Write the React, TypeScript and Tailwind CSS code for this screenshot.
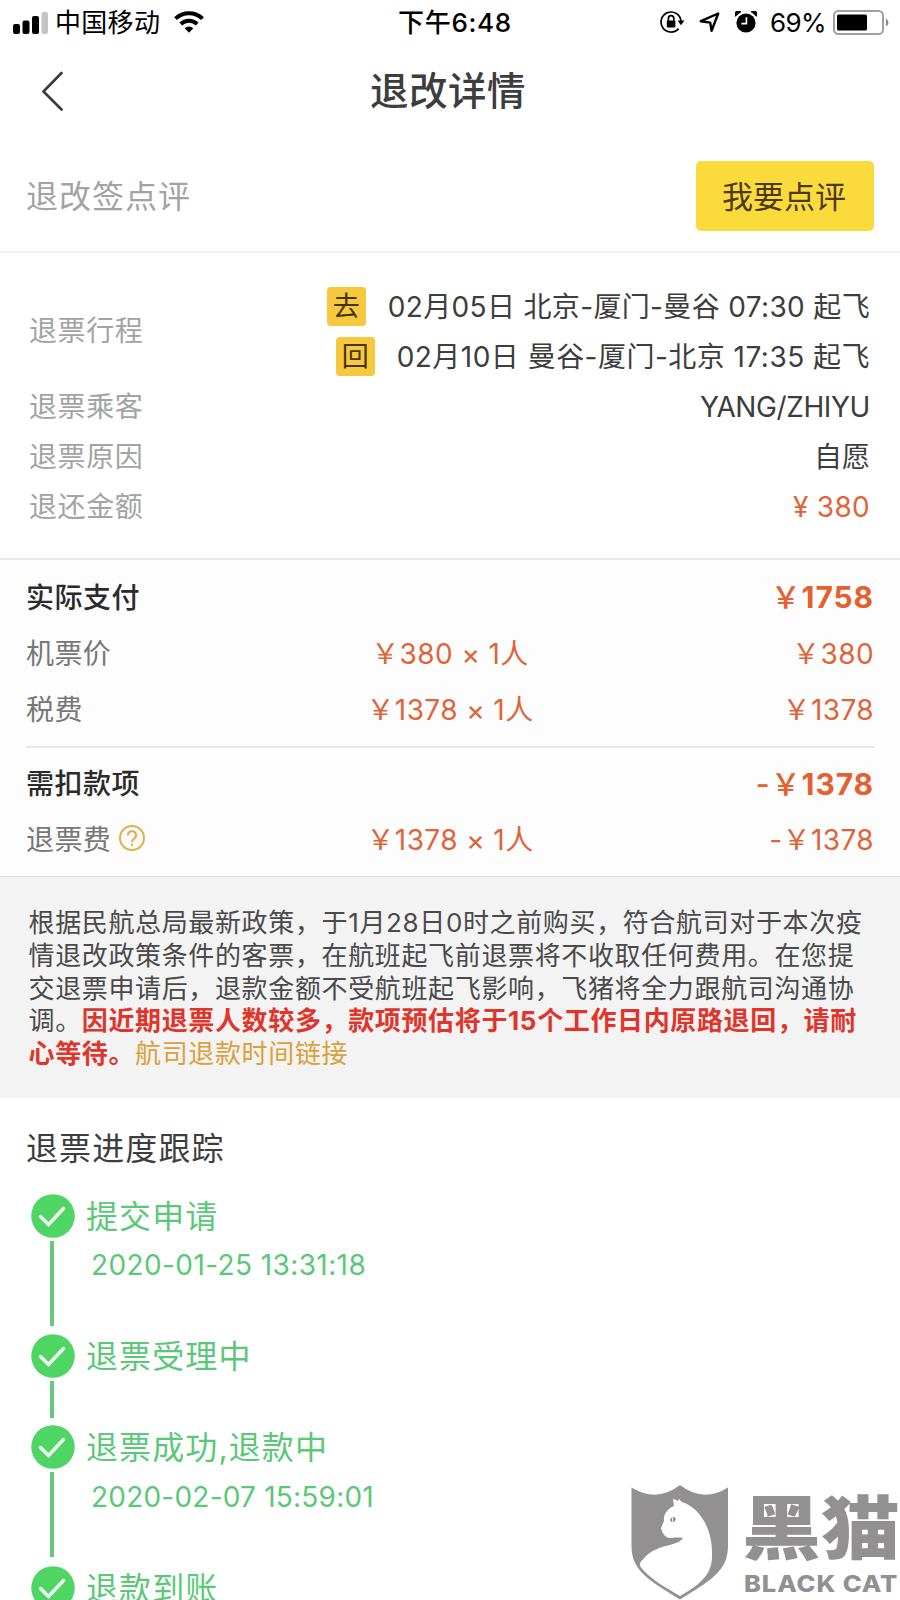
import type { ReactNode } from "react";

const trips = [
  { tag: "去", text: "02月05日 北京-厦门-曼谷 07:30 起飞", spacing: "tracking-[0.35px]" },
  { tag: "回", text: "02月10日 曼谷-厦门-北京 17:35 起飞", spacing: "tracking-[0.48px]" },
];

const steps = [
  { title: "提交申请", time: "2020-01-25 13:31:18", spacing: "tracking-[0.4px]", height: "h-[140.5px]", line: "h-[85px]" },
  { title: "退票受理中", height: "h-[91px]", line: "h-[37px]" },
  { title: "退票成功,退款中", time: "2020-02-07 15:59:01", spacing: "tracking-[0.22px]", height: "h-[140.5px]", line: "h-[85px]" },
  { title: "退款到账", height: "h-[44px]" },
];

function StatusBar() {
  return (
    <div className="h-[46px] shrink-0 flex items-center justify-between pl-[13px] pr-[10px] text-black">
      <div className="flex items-center w-[300px]">
        <svg width="36" height="22" viewBox="0 0 36 22">
          <rect x="0" y="12" width="7" height="10" rx="2" />
          <rect x="9.5" y="8.5" width="7" height="13.5" rx="2" />
          <rect x="19" y="4" width="7" height="18" rx="2" />
          <rect x="28.5" y="0" width="6.5" height="22" rx="2" fill="#c4c4c4" />
        </svg>
        <span className="ml-[6px] text-[26px] leading-none tracking-[0.3px]">中国移动</span>
        <svg className="ml-[14px] mb-[2px]" width="30" height="22" viewBox="0 0 30 22" fill="none" stroke="#000" strokeWidth="4">
          <path d="M1.5 7.6a19.5 19.5 0 0 1 27 0" />
          <path d="M6.8 13a12 12 0 0 1 16.4 0" />
          <path d="M15 21.8l-4.3-4.6a6.2 6.2 0 0 1 8.6 0z" fill="#000" stroke="none" />
        </svg>
      </div>
      <span className="pl-[7px] text-[26px] leading-none font-medium tracking-[0.7px]">下午6:48</span>
      <div className="flex items-center justify-end w-[300px]">
        {/* rotation lock */}
        <svg className="mb-[2px]" width="25" height="22" viewBox="0 0 25 22" fill="none" stroke="#000" strokeWidth="1.7">
          <path d="M18.6 17.6A10 10 0 1 1 21 10" />
          <path d="M17.5 9.6h7l-3.5 4.6z" fill="#000" stroke="none" />
          <rect x="6.8" y="9.6" width="8.6" height="6.8" rx="1" fill="#000" stroke="none" />
          <path d="M8.4 10V7.4a2.7 2.7 0 0 1 5.4 0V10" />
        </svg>
        <svg className="ml-[14px] mb-[2px]" width="21" height="21" viewBox="0 0 21 21" fill="none" stroke="#000" strokeWidth="2.4" strokeLinejoin="round">
          <path d="M19.2 1.5 12.6 18.8 11.2 10.6 1.8 9.2z" />
        </svg>
        {/* alarm clock */}
        <svg className="ml-[15px] mb-[2px]" width="22" height="22" viewBox="0 0 22 22">
          <circle cx="11" cy="12" r="9.6" />
          <path d="M1 5.2a3 3 0 0 1 4.6-4M21 5.2a3 3 0 0 0-4.6-4" stroke="#000" strokeWidth="1.6" />
          <path d="M11.4 6.2v6.4H6.4" stroke="#fff" strokeWidth="1.7" fill="none" />
        </svg>
        <span className="ml-[13px] mr-[7px] text-[26px] leading-none tracking-[-0.6px]">69%</span>
        <svg className="mb-[2px]" width="57" height="25" viewBox="0 0 57 25">
          <rect x="1" y="1" width="49" height="23" rx="4.5" fill="none" stroke="#a0a0a0" strokeWidth="2" />
          <rect x="4" y="4.5" width="30" height="16" rx="1.5" />
          <path d="M53 8.5a4.5 4.5 0 0 1 0 8z" fill="#8c8c8c" />
        </svg>
      </div>
    </div>
  );
}

function DetailRow({ label, children }: { label: string; children: ReactNode }) {
  return (
    <div className="h-[50.2px] flex items-center justify-between pl-[29px] pr-[30px]">
      <span className="text-[#a3a3a3] tracking-[0.6px]">{label}</span>
      {children}
    </div>
  );
}

function PriceRow({ label, unit, total, help }: { label: string; unit: string; total: string; help?: boolean }) {
  return (
    <div className="h-[56.5px] grid grid-cols-[1fr_auto_1fr] items-center text-[#e0643a]">
      <span className="flex items-center text-[#777777] tracking-[0.4px]">
        {label}
        {help && (
          <svg className="ml-[7px] mb-[4px]" width="28" height="28" viewBox="0 0 28 28" fill="none" stroke="#dcb04a" strokeWidth="2">
            <circle cx="14" cy="14" r="12" />
            <path d="M9.9 11.4a4.1 4.1 0 1 1 6.2 3.4c-1.4.9-2.1 1.5-2.1 3.2" />
            <path d="M14 19.6v2.2" />
          </svg>
        )}
      </span>
      <span className="tracking-[0.4px]">{unit}</span>
      <span className="text-right tracking-[0.4px]">{total}</span>
    </div>
  );
}

function TotalRow({ label, sign, total }: { label: string; sign: string; total: string }) {
  return (
    <div className="h-[56px] flex items-center justify-between">
      <span className="font-medium text-[#2b2b2b] tracking-[0.5px]">{label}</span>
      <span className="pb-[1px] text-[30px] font-bold tracking-[0.9px] text-[#e4602f]">
        <span className="font-medium">{sign}</span>
        {total}
      </span>
    </div>
  );
}

function CheckCircle() {
  return (
    <svg className="shrink-0" width="44" height="44" viewBox="0 0 44 44">
      <circle cx="22" cy="22" r="21.8" fill="#4fd564" />
      <path d="M9.5 22.5 17.5 30.5 32.5 14.5" fill="none" stroke="#effff0" strokeWidth="3.4" strokeLinecap="round" />
    </svg>
  );
}

function Watermark() {
  return (
    <div className="absolute left-[631px] top-[1484px] flex text-[#929091]">
      <svg width="98" height="116" viewBox="0 0 98 116">
        <path d="M.5 3.5Q26 19 49 1Q72 19 97 3.5V62C97 88 78 97 49 115.5C20 97 .5 88 .5 62z" fill="#929091" />
        {/* cat silhouette */}
        <path
          d="M42 14.5 46.5 17 48 15 51 18C69 24 82 45 81 72C81 89 72 99 49 112C36 104 18 95 9 82C8 78 12 76 14 73C28 59 46 63 52 54C46 53 42 54 38 54C34 53 31 49 30 44L33 37C32 29 38 24 43 22z"
          fill="#fff"
        />
        <ellipse cx="42" cy="35.5" rx="2.8" ry="2.3" fill="#929091" transform="rotate(-30 42 35.5)" />
        <path d="M41.5 33.5v4" stroke="#fff" strokeWidth="1" />
      </svg>
      <div className="ml-[14px] flex flex-col items-start">
        <span className="-ml-[1px] mt-[2px] h-[84px] text-[79px] leading-[84px] font-black whitespace-nowrap origin-center scale-y-[0.88]">黑猫</span>
        <span className="mt-[2px] ml-[1px] text-[23px] leading-[24px] font-extrabold tracking-[0.8px] whitespace-nowrap origin-left scale-x-[1.11]">BLACK CAT</span>
      </div>
    </div>
  );
}

export default function App() {
  return (
    <div className="relative w-[900px] h-[1600px] overflow-hidden flex flex-col bg-white font-['Inter','Noto_Sans_CJK_SC',sans-serif] text-[28px] leading-none text-[#3d3d3d]">
      <StatusBar />

      <header className="h-[90px] shrink-0 grid grid-cols-[1fr_auto_1fr] items-center">
        <svg className="ml-[41px]" width="22" height="40" viewBox="0 0 22 40" fill="none" stroke="#3a3a3a" strokeWidth="2.6" strokeLinecap="round" strokeLinejoin="round">
          <path d="M20.5 2 2.5 20.5 20.5 38.5" />
        </svg>
        <h1 className="pr-[4px] pt-[1px] text-[38.5px] font-medium tracking-[0.5px]">退改详情</h1>
      </header>

      <section className="h-[117px] shrink-0 flex items-center justify-between pt-[5px] pl-[26px] pr-[26px] border-b-2 border-[#efefef]">
        <span className="pt-[2px] text-[32px] tracking-[1px] text-[#a3a3a3]">退改签点评</span>
        <button className="w-[178px] h-[70px] pr-[2px] rounded-[5px] bg-[#fbda3c] text-[31px] text-[#4a3a10]">我要点评</button>
      </section>

      <section className="h-[307px] shrink-0 pt-[28px] border-b-2 border-[#e8e8e8]">
        <div className="h-[100.5px] flex items-center justify-between pl-[29px] pr-[30px]">
          <span className="text-[#a3a3a3] tracking-[0.6px]">退票行程</span>
          <div className="flex flex-col items-end">
            {trips.map((trip) => (
              <div key={trip.tag} className="h-[50.3px] flex items-center">
                <span className="w-[39px] h-[39px] mr-[22px] flex items-center justify-center rounded-[4px] bg-[#f6c83e] text-[27px] text-[#4a3208]">
                  {trip.tag}
                </span>
                <span className={`pt-[1px] ${trip.spacing}`}>{trip.text}</span>
              </div>
            ))}
          </div>
        </div>
        <DetailRow label="退票乘客">
          <span className="tracking-[-0.4px]">YANG/ZHIYU</span>
        </DetailRow>
        <DetailRow label="退票原因">自愿</DetailRow>
        <DetailRow label="退还金额">
          <span className="tracking-[0.3px] text-[#e0643a]">¥ 380</span>
        </DetailRow>
      </section>

      <section className="h-[317px] shrink-0 px-[26px] pt-[9.5px] bg-[#fdfdfd] border-b border-[#dcdcdc]">
        <TotalRow label="实际支付" sign="￥" total="1758" />
        <PriceRow label="机票价" unit="￥380 × 1人" total="￥380" />
        <PriceRow label="税费" unit="￥1378 × 1人" total="￥1378" />
        <div className="mt-[7.5px] h-[2px] mb-[8px] bg-[#e8e8e8]" />
        <TotalRow label="需扣款项" sign="-￥" total="1378" />
        <PriceRow label="退票费" unit="￥1378 × 1人" total="-￥1378" help />
      </section>

      <section className="h-[221px] shrink-0 pt-[30px] pl-[28.5px] bg-[#f3f3f3] text-[26px] leading-[32.8px] tracking-[0.64px] whitespace-nowrap text-[#4a4a4a]">
        <p>根据民航总局最新政策，于1月28日0时之前购买，符合航司对于本次疫</p>
        <p>情退改政策条件的客票，在航班起飞前退票将不收取任何费用。在您提</p>
        <p>交退票申请后，退款金额不受航班起飞影响，飞猪将全力跟航司沟通协</p>
        <p>
          调。<b className="font-bold text-[#e0352b]">因近期退票人数较多，款项预估将于15个工作日内原路退回，请耐</b>
        </p>
        <p>
          <b className="font-bold text-[#e0352b]">心等待。</b>
          <a className="text-[#d9a13c]">航司退款时间链接</a>
        </p>
      </section>

      <section className="shrink-0 pt-[31px] pl-[26px]">
        <h2 className="h-[40px] leading-[40px] text-[32px] tracking-[1.1px]">退票进度跟踪</h2>
        <ol className="mt-[24.5px] pl-[5px] text-[#5bc878]">
          {steps.map((step) => (
            <li key={step.title} className={`flex ${step.height}`}>
              <div className="w-[44px] flex flex-col items-center">
                <CheckCircle />
                {step.line && <div className={`mt-[3px] mr-[2px] w-[4px] bg-[#67c97f] ${step.line}`} />}
              </div>
              <div className="ml-[11px]">
                <div className="h-[44px] leading-[45px] text-[32px] tracking-[1.1px]">{step.title}</div>
                {step.time && <div className={`mt-[12.5px] ml-[5px] h-[30px] leading-[30px] ${step.spacing}`}>{step.time}</div>}
              </div>
            </li>
          ))}
        </ol>
      </section>

      <Watermark />
    </div>
  );
}
